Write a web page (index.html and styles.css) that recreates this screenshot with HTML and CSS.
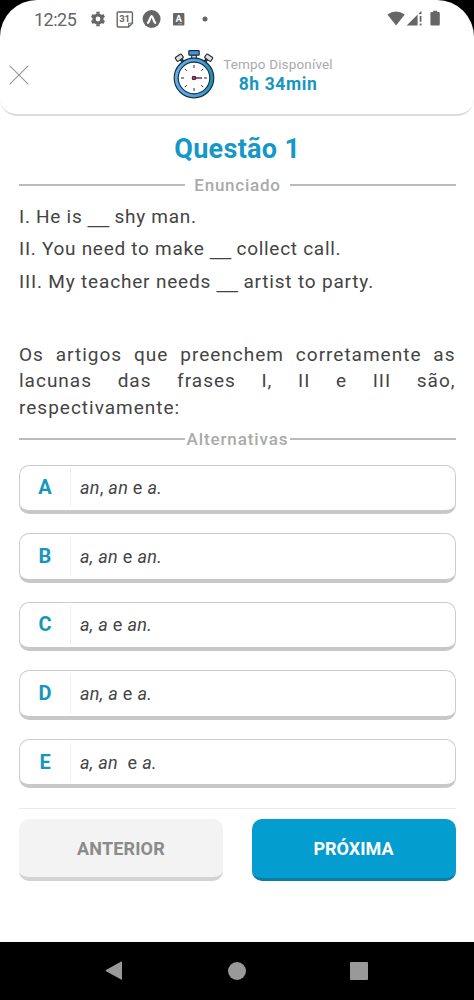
FILE: index.html
```html
<!DOCTYPE html>
<html lang="pt-BR">
<head>
<meta charset="utf-8">
<title>Questão 1</title>
<link rel="stylesheet" href="styles.css">
</head>
<body>
<div class="phone">
  <div class="screen">
    <div class="status">
      <span class="clock">12:25</span>
      <svg class="status-icons" width="118" height="22" viewBox="0 0 118 22">
        <g fill="none" stroke="#666">
          <circle cx="8" cy="11" r="4" stroke-width="3.2"/>
          <g stroke-width="3.4"><path d="M8 3.8v2M8 16.2v2M1.8 7.4l1.8 1M12.4 13.6l1.8 1M1.8 14.6l1.8-1M12.4 8.4l1.8-1"/></g>
          <path d="M28.2 4h13.2q1 0 1 1v10.2l-3.8 3.8H28.2q-1 0-1-1V5q0-1 1-1z" stroke-width="1.4"/>
          <path d="M38.6 19v-3.8h3.8" stroke-width="1"/>
        </g>
        <text class="glyph" x="34.6" y="14.4" text-anchor="middle" fill="#666">31</text>
        <circle cx="61.6" cy="11" r="9" fill="#666"/>
        <path d="M58 14.8c2-2.4 2.4-6.8 3.6-6.8s1.6 4.4 3.6 6.8" fill="none" stroke="#fff" stroke-width="2.2" stroke-linecap="round"/>
        <rect x="83" y="5" width="11.4" height="12.6" rx="1" fill="#666"/>
        <text class="glyph" x="88.7" y="14" text-anchor="middle" fill="#fff">A</text>
        <path d="M88 15.8h4" stroke="#bbb" stroke-width=".8"/>
        <circle cx="115" cy="11" r="2.5" fill="#666"/>
      </svg>
      <svg class="signal" width="54" height="18" viewBox="0 0 54 18">
        <g fill="#666">
          <path d="M.4 4.6Q9 -1.6 17.8 4.6L9.1 15.4z"/>
          <path d="M19.6 15.4L30.6 4.4v11zM31.8 3.4l2.6-2.6v3.4h-2.6zM32.7 6h1.8v5.8h-1.8zM32.7 13.4h1.8v2h-1.8z"/>
          <path d="M46.2 2v-1.2h4V2h1.3q1.3 0 1.3 1.2v11q0 1.2-1.2 1.2h-7q-1.2 0-1.2-1.2v-11Q43.400 2 44.6 2z"/>
        </g>
      </svg>
    </div>
    <header class="header">
      <svg class="close" width="20" height="20" viewBox="0 0 20 20"><path d="M.6 .6l18.800 18.800M19.400 .6L.6 19.400" stroke="#999" stroke-width="1.200"/></svg>
      <div class="timer">
        <svg width="44" height="50" viewBox="0 0 44 50">
          <defs><linearGradient id="rim"><stop offset="0" stop-color="#63b0f0"/><stop offset=".65" stop-color="#4aa0df"/><stop offset="1" stop-color="#168fae"/></linearGradient></defs>
          <g stroke="#20313e" stroke-width="1.200" stroke-linejoin="round">
            <path d="M19.700 6h4.600v4h-4.600z" fill="#ddd"/>
            <path d="M9 10l3 4M35 10l-3 4" stroke-width="3"/>
            <rect x="16.800" y="1.600" width="10.400" height="4.600" rx=".8" fill="#409bd8"/>
            <rect x="3.600" y="6.400" width="7.400" height="4.600" rx="1" fill="#e3ded7" transform="rotate(-35 7.300 8.700)"/>
            <rect x="33" y="6.400" width="7.400" height="4.600" rx="1" fill="#e3ded7" transform="rotate(35 36.700 8.700)"/>
            <circle cx="22" cy="29" r="19.800" fill="url(#rim)"/>
            <circle cx="22" cy="29" r="15.800" fill="#fff"/>
          </g>
          <path d="M22 16v3M22 39v3M9 29h3M32 29h3M12.800 19.800l2 2M31.200 19.800l-2 2M12.800 38.200l2-2M31.200 38.200l-2-2" stroke="#222e3c" stroke-width="1"/>
          <path d="M22 29h8" stroke="#5b1230" stroke-width="1.300"/>
          <circle cx="22" cy="29" r="1.800" fill="#9b5277" stroke="#4b1230" stroke-width="1.100"/>
        </svg>
        <div class="timer-text">
          <span class="timer-label">Tempo Disponível</span>
          <span class="timer-value">8h 34min</span>
        </div>
      </div>
    </header>
    <main class="content">
      <h1 class="title">Questão 1</h1>
      <div class="divider"><span class="divider-label">Enunciado</span></div>
      <div class="sentences">
        <p class="s1">I. He is <span class="blank">__</span> shy man.</p>
        <p class="s2">II. You need to make <span class="blank">__</span> collect call.</p>
        <p class="s3">III. My teacher needs <span class="blank">__</span> artist to party.</p>
      </div>
      <p class="prompt">Os artigos que preenchem corretamente as lacunas das frases I, II e III são, respectivamente:</p>
      <div class="divider alt"><span class="divider-label">Alternativas</span></div>
      <div class="options">
        <div class="option"><b class="letter">A</b><span class="answer"><i>an</i>, <i>an</i> e <i>a.</i></span></div>
        <div class="option"><b class="letter">B</b><span class="answer"><i>a, an</i> e <i>an.</i></span></div>
        <div class="option"><b class="letter">C</b><span class="answer"><i>a, a</i> e <i>an.</i></span></div>
        <div class="option"><b class="letter">D</b><span class="answer"><i>an, a</i> e <i>a.</i></span></div>
        <div class="option"><b class="letter">E</b><span class="answer"><i>a, an</i>&nbsp; e <i>a.</i></span></div>
      </div>
      <div class="actions">
        <div class="button previous">ANTERIOR</div>
        <div class="button next">PRÓXIMA</div>
      </div>
    </main>
  </div>
  <nav class="nav">
    <svg width="20" height="20" viewBox="0 0 20 20"><path d="M17 .8v17.400q0 .8-.8.4L1 10.200q-.8-.6 0-1.100L16.200.400q.8-.4.8.4z" fill="#999"/></svg>
    <svg width="20" height="20" viewBox="0 0 20 20"><circle cx="10" cy="10" r="9" fill="#999"/></svg>
    <svg width="20" height="20" viewBox="0 0 20 20"><rect x="1" y="1" width="18" height="18" rx="1" fill="#999"/></svg>
  </nav>
</div>
</body>
</html>
```
FILE: styles.css
```css
* { box-sizing: border-box; }
body { margin: 0; background: #000; font-family: Roboto, "Liberation Sans", sans-serif; color: #444; }
p, h1 { margin: 0; }
svg { display: block; flex: none; }
.phone { width: 474px; height: 1000px; overflow: hidden; display: flex; flex-direction: column; background: #000; }
.screen { height: 942px; background: #fff; border-radius: 37px 37px 0 0; }
.status { height: 38px; display: flex; align-items: center; padding: 0 33px 0 34px; }
.clock { width: 56px; font-size: 18px; letter-spacing: -.5px; color: #666; white-space: nowrap; }
.glyph { font: bold 9.5px Roboto, sans-serif; }
.signal { margin-left: auto; }
.header { height: 78px; display: flex; border-bottom: 2px solid #ddd; border-radius: 0 0 17px 17px; padding: 11px 9px; }
.close { margin-top: 16px; }
.timer { display: flex; margin-left: 143px; }
.timer-text { width: 112px; margin-left: 6px; display: flex; flex-direction: column; align-items: center; padding-top: 6px; white-space: nowrap; }
.timer-label { font-size: 13.5px; line-height: 18px; letter-spacing: .15px; color: #aaa; }
.timer-value { font-size: 17.5px; line-height: 23px; font-weight: 700; color: #1796c1; letter-spacing: .6px; }
.content { padding: 14px 18.500px 0 19px; }
.title { height: 38px; line-height: 38px; font-size: 27px; font-weight: 700; color: #1597c8; text-align: center; letter-spacing: .3px; }
.divider { height: 34px; display: grid; grid-template-columns: 166px 105px 166px; align-items: center; text-align: center; white-space: nowrap; }
.divider::before, .divider::after { content: ""; height: 2px; background: #bbb; }
.divider-label { font-size: 17px; font-weight: 500; color: #aaa; letter-spacing: .75px; }
.alt .divider-label { letter-spacing: .9px; }
.sentences { height: 140px; margin-top: -1px; font-size: 19px; line-height: 32.400px; white-space: nowrap; }
.s1, .s2 { letter-spacing: .72px; }
.s3 { letter-spacing: .82px; }
.blank { font-family: "Liberation Sans", sans-serif; letter-spacing: 0; line-height: 1; }
.prompt { font-size: 19px; line-height: 26.400px; height: 81px; padding-top: 1px; letter-spacing: 1px; text-align: justify; }
.options { display: flex; flex-direction: column; gap: 19px; padding-top: 8.500px; }
.option { height: 49.600px; display: flex; align-items: center; border: 1px solid #ccc; border-bottom: 4px solid #c8c8c8; border-radius: 10px; }
.letter { width: 51px; height: 39px; line-height: 38px; text-align: center; font-size: 20px; color: #1597bd; border-right: 1px solid #eee; }
.answer { padding: 0 0 0 9px; font-size: 18px; letter-spacing: .3px; white-space: nowrap; }
.actions { margin-top: 19.500px; border-top: 1px solid #e8e8e8; padding-top: 10px; display: flex; justify-content: space-between; }
.button { width: 204px; height: 62px; border-radius: 10px; display: flex; align-items: center; justify-content: center; font-size: 18px; font-weight: 700; padding-top: 1px; }
.previous { color: #8b8b8b; background: #f3f3f3; border-bottom: 4px solid #d3d3d3; letter-spacing: .15px; }
.next { color: #fff; background: #039dcf; border-bottom: 3px solid #087fa5; }
.nav { height: 58px; display: flex; align-items: center; justify-content: center; gap: 102px; }
```
